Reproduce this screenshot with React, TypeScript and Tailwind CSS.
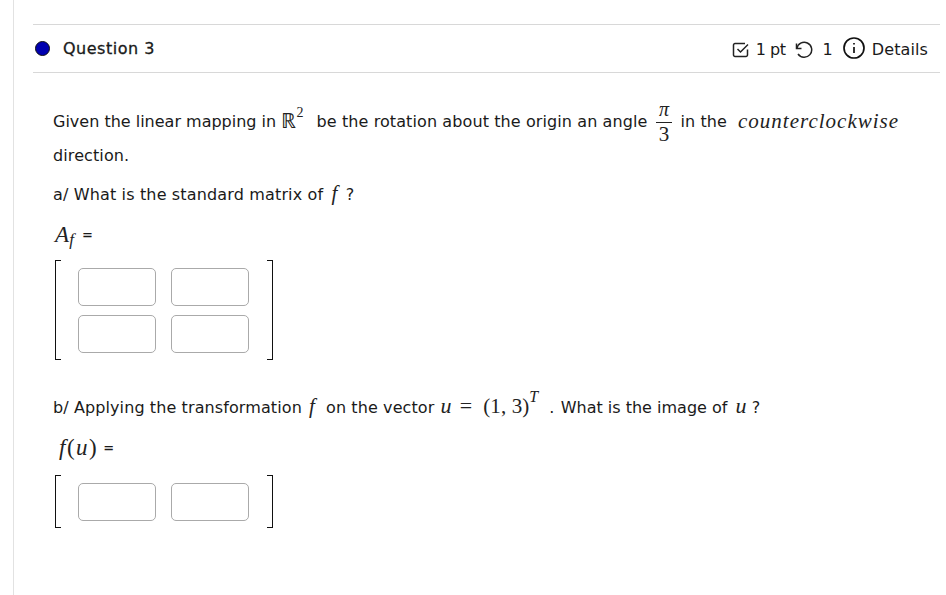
const sans = "font-['DejaVu_Sans','Noto_Sans',sans-serif]";

function M({ children, className = "" }: { children: React.ReactNode; className?: string }) {
  return <span className={`font-['Liberation_Serif',serif] text-[#222] ${className}`}>{children}</span>;
}

function Box() {
  return <input className="w-[78px] h-[38px] bg-white border border-[#aaa] rounded-[5px]" />;
}

function Bracket({ side, height }: { side: "l" | "r"; height: string }) {
  return (
    <div
      className={`w-[6px] border-y border-[#111] ${height} ${side === "l" ? "border-l" : "border-r"}`}
    />
  );
}

export default function App() {
  return (
    <div className={`${sans} h-[595px] w-[946px] overflow-hidden bg-white text-[16px] tracking-[0.1px] text-[#1a1a1a]`}>
      <div className="ml-[13px] h-full border-l border-[#e2e2e2] pl-[19px] pr-[6px] pt-[24px]">
        <div className="flex h-[49px] items-center justify-between border-y border-[#d8d8d8] pl-[2px] pr-[12px]">
          <div className="flex items-center gap-[13px]">
            <span className="h-[15px] w-[15px] rounded-full border border-[#111] bg-[#0000b0]" />
            <span className="tracking-[0.5px] [-webkit-text-stroke:0.3px_#1a1a1a]">Question 3</span>
          </div>
          <div className="mt-[3px] flex items-center">
            <svg width="18" height="18" viewBox="0 0 18 18" fill="none" stroke="#222" strokeWidth="1.5" className="mr-[6px]">
              <path d="M15.500 8.500v5.500a1.500 1.500 0 0 1-1.500 1.500H3A1.500 1.500 0 0 1 1.500 14V4A1.500 1.500 0 0 1 3 2.500h10" />
              <path d="M5.500 8l3 3 7.500-7.500" />
            </svg>
            <span className="tracking-[-0.5px]">1 pt</span>
            <svg width="20" height="18" viewBox="0 0 20 18" fill="none" stroke="#222" strokeWidth="1.5" className="ml-[8px] mr-[9px]">
              <path d="M2.500 2.500v5h5" />
              <path d="M2.800 7.500A7.500 7.500 0 1 1 4 13" />
            </svg>
            <span>1</span>
            <svg width="24" height="24" viewBox="0 0 24 24" fill="none" stroke="#111" strokeWidth="1.700" className="ml-[9px] mr-[6px] mb-[5px]">
              <circle cx="12" cy="12" r="10" />
              <path d="M12 11v6M12 7v1.500" />
            </svg>
            <span>Details</span>
          </div>
        </div>

        <div className="pl-[20px] pt-[27px]">
          <div className="flex h-[44px] items-center whitespace-pre">
            <span className="tracking-normal">Given the linear mapping in </span>
            <M className="text-[21px]">
              ℝ<sup className="relative -top-[3px] text-[14px] align-super leading-none">2</sup>
            </M>
            <span className="ml-[13px]">be the rotation about the origin an angle</span>
            <span className="mx-[8px] flex w-[17px] flex-col items-center leading-none">
              <M className="border-b border-[#222] px-[3px] pb-[3px] text-[20px] italic">π</M>
              <M className="pt-[1px] text-[21px]">3</M>
            </span>
            <span>in the</span>
            <M className="ml-[11px] text-[21px] italic tracking-[1px]">counterclockwise</M>
          </div>
          <p className="leading-[24px]">direction.</p>
          <p className="mt-[13px] leading-[24px] tracking-[0.15px]">
            a/ What is the standard matrix of <M className="ml-[3px] mr-[3px] text-[21px] italic">f</M> ?
          </p>
          <div className="mt-[15px] flex h-[26px] items-center pl-[2px]">
            <M className="text-[23px] italic">A</M>
            <M className="mt-[10px] text-[17px] italic">f</M>
            <span className="ml-[8px] text-[13px] font-bold">=</span>
          </div>
          <div className="ml-[2px] mt-[12px] flex w-[218px] items-center justify-between">
            <Bracket side="l" height="h-[100px]" />
            <div className="mr-[2px] grid grid-cols-2 gap-x-[15px] gap-y-[9px]">
              <Box />
              <Box />
              <Box />
              <Box />
            </div>
            <Bracket side="r" height="h-[100px]" />
          </div>
          <div className="mt-[31px] h-[30px] whitespace-pre leading-[30px]">
            <span>b/ Applying the transformation </span>
            <M className="ml-[2px] mr-[11px] text-[21px] italic">f</M>
            <span>on the vector </span>
            <M className="ml-[1px] text-[22px] italic">u</M>
            <M className="mx-[8px] text-[22px]">=</M>
            <M className="ml-[3px] text-[21px]">
              (1, 3)<sup className="relative -top-[11px] text-[16px] italic leading-none">T</sup>
            </M>
            <span className="ml-[11px] mr-[1px]">. </span>
            <span className="tracking-normal">What is the image of </span>
            <M className="ml-[3px] text-[22px] italic">u</M>
            <span> ?</span>
          </div>
          <div className="mt-[14px] flex h-[26px] items-center pl-[6px]">
            <M className="text-[23px] tracking-[1.5px]">
              <i>f</i>(<i>u</i>)
            </M>
            <span className="ml-[5px] text-[13px] font-bold">=</span>
          </div>
          <div className="ml-[2px] mt-[14px] flex w-[218px] items-center justify-between">
            <Bracket side="l" height="h-[53px]" />
            <div className="mr-[2px] flex gap-[15px]">
              <Box />
              <Box />
            </div>
            <Bracket side="r" height="h-[53px]" />
          </div>
        </div>
      </div>
    </div>
  );
}
